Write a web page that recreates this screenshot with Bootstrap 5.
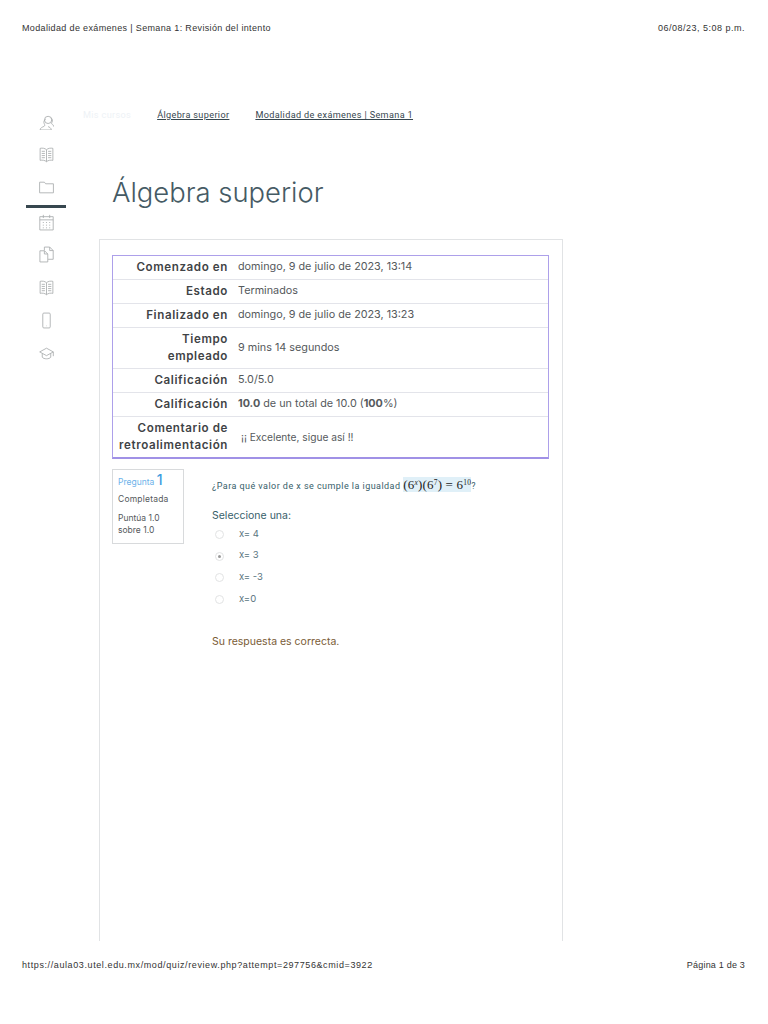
<!DOCTYPE html>
<html lang="es">
<head>
    <meta charset="UTF-8">
    <meta name="viewport" content="width=device-width, initial-scale=1.0">
    <title>Modalidad de exámenes | Semana 1: Revisión del intento</title>
    <link href="https://cdn.jsdelivr.net/npm/bootstrap@5.3.0/dist/css/bootstrap.min.css" rel="stylesheet">
    <style>
        html, body { height: 1024px; overflow: hidden; }
        body { background: #fff; font-family: "Inter", "Open Sans", sans-serif; color: #4a4f52; }
        .print-line { font-family: "Liberation Sans", sans-serif; font-size: 9px; letter-spacing: .25px; color: #333; padding: 0 23px 0 22px; line-height: 12px; }
        .print-head { padding-top: 22px; height: 34px; letter-spacing: .35px; }
        .print-head .date { letter-spacing: .5px; }
        .print-foot { padding-top: 18px; }
        .print-foot .url { letter-spacing: .6px; }
        .print-foot .pg { letter-spacing: .2px; }
        .page-area { height: 907px; overflow: hidden; }
        .side-nav { width: 99px; padding: 23px 0 0 26px; }
        .side-nav .nav-item { width: 40px; height: 33px; display: flex; justify-content: center; padding-top: 8px; }
        .side-nav svg { width: 15px; height: 17px; fill: none; stroke: #a9acae; stroke-width: .8; }
        .side-nav .active-bar { width: 40px; height: 3px; background: #37474f; margin: 1px 0 1px; }
        .side-nav .after-bar { height: 29px; padding-top: 5px; }
        .crumbs { font-family: "Roboto", sans-serif; font-size: 9.1px; letter-spacing: .36px; line-height: 12px; padding: 27px 0 0; margin-left: -16px; gap: 26px; }
        .crumbs a { color: #37474f; }
        .crumbs .faded { color: #eef2f6; text-decoration: none; }
        .page-title { font-family: "Inter", sans-serif; font-weight: 300; font-size: 27.4px; line-height: 32px; color: #455a64; margin: 55px 0 31px 13px; }
        .main-card { width: 464px; border: 1px solid #e1e3e5; border-bottom: 0; padding: 15px 13px 0 12px; height: 702px; }
        .summary-wrap { width: 437px; border: 1px solid #ada0ea; border-bottom: 2px solid #a091e6; }
        .summary { width: 100%; margin: 0; font-size: 10.8px; table-layout: fixed; }
        .summary tr { border-bottom: 1px solid #e3e4ea; }
        .summary tr:last-child { border-bottom: 0; }
        .summary th { width: 115px; text-align: right; font-weight: 600; color: #3f4346; line-height: 16px; padding: 3px 0 4px; vertical-align: middle; font-size: 11.6px; letter-spacing: .6px; white-space: nowrap; }
        .summary td { padding: 3px 0 4px 10px; vertical-align: middle; line-height: 16px; color: #55595c; }
        .summary tr.tall th { line-height: 16.5px; }
        .summary .comment { font-size: 10.2px; padding-left: 13px; }
        .question { padding-top: 10px; }
        .q-info { width: 72px; height: 75px; flex: none; border: 1px solid #d8dadc; padding: 4px 5px; font-size: 8.5px; line-height: 12px; color: #55595c; }
        .q-info .q-no { color: #6cb2ea; height: 19px; }
        .q-info .q-no b { font-size: 14px; font-weight: 500; color: #3d9be0; line-height: 12px; }
        .q-info .q-state { margin-bottom: 7px; letter-spacing: .2px; }
        .q-body { margin-left: 28px; padding-top: 7px; }
        .q-text { font-family: "Roboto", sans-serif; font-size: 9px; letter-spacing: .45px; color: #37606a; line-height: 18px; white-space: nowrap; }
        .q-text .math { font-family: "Liberation Serif", serif; font-size: 13px; letter-spacing: .2px; background: #e0f0f8; color: #222; }
        .q-text sup { font-size: 7.5px; top: -.5em; }
        .q-prompt { font-size: 10.5px; color: #37606a; line-height: 14px; margin-top: 14px; }
        .q-options { font-size: 9.5px; color: #5a7480; }
        .q-options li { height: 21.7px; display: flex; align-items: center; gap: 15px; padding-left: 3px; }
        .radio-dot { width: 9px; height: 9px; border: 1px solid #e2e3e4; border-radius: 50%; display: flex; align-items: center; justify-content: center; margin-top: 1px; }
        .radio-dot.checked::after { content: ""; width: 3px; height: 3px; border-radius: 50%; background: #999; }
        .q-feedback { font-size: 10.5px; color: #7a5c36; margin-top: 25px; line-height: 14px; }
    </style>
</head>
<body>
    <!-- Print header -->
    <div class="print-line print-head d-flex justify-content-between">
        <span>Modalidad de exámenes | Semana 1: Revisión del intento</span>
        <span class="date">06/08/23, 5:08 p.m.</span>
    </div>

    <div class="page-area d-flex pt-5">
        <!-- Sidebar icons -->
        <nav class="side-nav flex-shrink-0">
            <div class="nav-item"><svg viewBox="0 -2 14 16"><circle cx="8.500" cy="4.500" r="3.400"/><path d="M1 14c0-2 2-2.600 3.600-3.400 1-.5.9-1.500.3-2.400-.8-1.400-.3-3.800 1.400-4.400M1 14h10.500M11.500 14c0-2-1.800-2.600-3-3.200M11 2.500c1.500.6 2 2.700 1.100 4.300-.4.800-.4 1.600.3 2 1 .5 1.600 1 1.600 2.200"/></svg></div>
            <div class="nav-item"><svg viewBox="0 0 14 16"><path d="M7 3.500C5.500 2 3 1.800 1 2.200v11.300c2-.4 4.500-.2 6 1.300 1.500-1.500 4-1.700 6-1.300V2.200C11 1.800 8.500 2 7 3.500zM7 3.500v11.300M2.500 5h3M2.500 7h3M2.500 9h3M2.500 11h3M8.500 5h3M8.500 7h3M8.500 9h3M8.500 11h3"/></svg></div>
            <div class="nav-item"><svg viewBox="0 0 14 16"><path d="M.5 3h4.500l1.200 1.500h7.300v8.500H.5z"/></svg></div>
            <div class="active-bar"></div>
            <div class="nav-item after-bar"><svg viewBox="0 0 14 16"><path d="M.7 2.500h12.600v12.500H.7zM.7 5.500h12.600M4 .8v3M10 .8v3M3.500 8h1M6.500 8h1M9.500 8h1M3.500 10.500h1M6.500 10.500h1M9.500 10.500h1M3.500 13h1M6.500 13h1M9.500 13h1"/></svg></div>
            <div class="nav-item"><svg viewBox="0 0 14 16"><path d="M5 4V1h5l3.300 3.300V12.500H8.500M10 1v3.300h3.300M.8 4.500h4.400l3 3v7.500H.8zM5 4.500v3h3.200"/></svg></div>
            <div class="nav-item"><svg viewBox="0 0 14 16"><path d="M7 3.500C5.500 2 3 1.800 1 2.200v11.300c2-.4 4.500-.2 6 1.300 1.500-1.500 4-1.700 6-1.300V2.200C11 1.800 8.500 2 7 3.500zM7 3.500v11.300M2.500 5h3M2.500 7h3M2.500 9h3M2.500 11h3M8.500 5h3M8.500 7h3M8.500 9h3M8.500 11h3"/></svg></div>
            <div class="nav-item"><svg viewBox="0 0 14 16"><rect x="3.500" y="1" width="7" height="14" rx="1"/><path d="M6.800 13h.4"/></svg></div>
            <div class="nav-item"><svg viewBox="0 0 14 16"><path d="M7 3 .6 6.500 7 10l6.400-3.500zM3 8v3.500c1.500 2 6.500 2 8 0V8M13.400 6.500v4"/></svg></div>
        </nav>

        <!-- Page content -->
        <div class="flex-grow-1">
            <div class="crumbs d-flex">
                <a class="faded" href="#">Mis cursos</a>
                <a href="#">Álgebra superior</a>
                <a href="#">Modalidad de exámenes | Semana 1</a>
            </div>
            <h1 class="page-title">Álgebra superior</h1>

            <div class="main-card">
                <div class="summary-wrap">
                    <table class="summary">
                        <tr><th>Comenzado en</th><td>domingo, 9 de julio de 2023, 13:14</td></tr>
                        <tr><th>Estado</th><td>Terminados</td></tr>
                        <tr><th>Finalizado en</th><td>domingo, 9 de julio de 2023, 13:23</td></tr>
                        <tr class="tall"><th>Tiempo<br>empleado</th><td>9 mins 14 segundos</td></tr>
                        <tr><th>Calificación</th><td>5.0/5.0</td></tr>
                        <tr><th>Calificación</th><td><b>10.0</b> de un total de 10.0 (<b>100</b>%)</td></tr>
                        <tr class="tall"><th>Comentario de<br>retroalimentación</th><td class="comment">¡¡ Excelente, sigue así !!</td></tr>
                    </table>
                </div>

                <div class="question d-flex">
                    <div class="q-info">
                        <div class="q-no">Pregunta <b>1</b></div>
                        <div class="q-state">Completada</div>
                        <div>Puntúa 1.0<br>sobre 1.0</div>
                    </div>
                    <div class="q-body">
                        <div class="q-text">¿Para qué valor de x se cumple la igualdad <span class="math">(6<sup><i>x</i></sup>)(6<sup>7</sup>) = 6<sup>10</sup></span>?</div>
                        <div class="q-prompt">Seleccione una:</div>
                        <ul class="q-options list-unstyled mb-0">
                            <li><span class="radio-dot"></span><span>x= 4</span></li>
                            <li><span class="radio-dot checked"></span><span>x= 3</span></li>
                            <li><span class="radio-dot"></span><span>x= -3</span></li>
                            <li><span class="radio-dot"></span><span>x=0</span></li>
                        </ul>
                        <div class="q-feedback">Su respuesta es correcta.</div>
                    </div>
                </div>
            </div>
        </div>
    </div>

    <!-- Print footer -->
    <div class="print-line print-foot d-flex justify-content-between">
        <span class="url">https://aula03.utel.edu.mx/mod/quiz/review.php?attempt=297756&amp;cmid=3922</span>
        <span class="pg">Página 1 de 3</span>
    </div>

    <script src="https://cdn.jsdelivr.net/npm/bootstrap@5.3.0/dist/js/bootstrap.bundle.min.js"></script>
</body>
</html>
